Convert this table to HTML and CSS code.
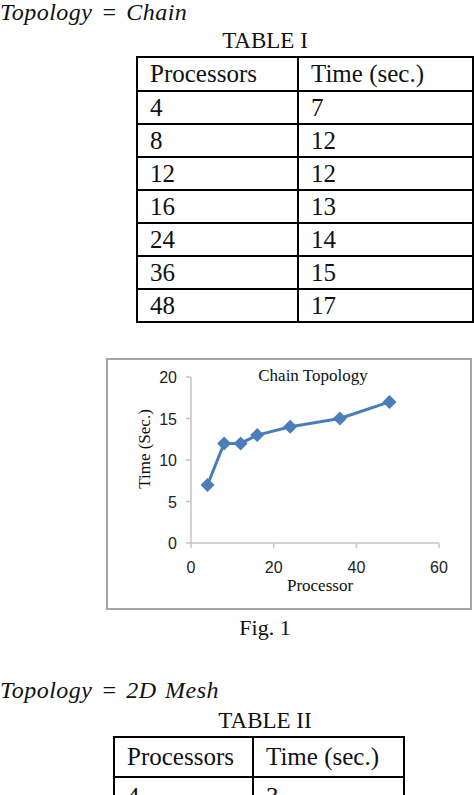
FILE: index.html
```html
<!DOCTYPE html>
<html lang="en">
<head>
    <meta charset="UTF-8">
    <meta name="viewport" content="width=device-width, initial-scale=1.0">
    <title>Topology results</title>
    <link rel="stylesheet" href="styles.css">
</head>
<body>
    <p class="topology">Topology = Chain</p>
    <p class="caption">TABLE I</p>
    <table class="results results-chain">
        <tr class="head"><td>Processors</td><td>Time (sec.)</td></tr>
        <tr><td>4</td><td>7</td></tr>
        <tr><td>8</td><td>12</td></tr>
        <tr><td>12</td><td>12</td></tr>
        <tr><td>16</td><td>13</td></tr>
        <tr><td>24</td><td>14</td></tr>
        <tr><td>36</td><td>15</td></tr>
        <tr><td>48</td><td>17</td></tr>
    </table>

    <div class="figure-box">
        <svg class="chart" width="362" height="248" viewBox="0 0 362 248">
            <!-- axes -->
            <g stroke="#c4c4c4" stroke-width="1.5" fill="none">
                <line x1="83" y1="17" x2="83" y2="188"/>
                <line x1="78" y1="183" x2="331" y2="183"/>
                <line x1="78" y1="17" x2="83" y2="17"/>
                <line x1="78" y1="58.5" x2="83" y2="58.5"/>
                <line x1="78" y1="100" x2="83" y2="100"/>
                <line x1="78" y1="141.5" x2="83" y2="141.5"/>
                <line x1="165.7" y1="183" x2="165.7" y2="188"/>
                <line x1="248.4" y1="183" x2="248.4" y2="188"/>
                <line x1="331" y1="183" x2="331" y2="188"/>
            </g>
            <g class="tick-label" text-anchor="end">
                <text x="69" y="23">20</text>
                <text x="69" y="64.5">15</text>
                <text x="69" y="106">10</text>
                <text x="69" y="147.5">5</text>
                <text x="69" y="189">0</text>
            </g>
            <g class="tick-label" text-anchor="middle">
                <text x="83" y="213">0</text>
                <text x="165.7" y="213">20</text>
                <text x="248.4" y="213">40</text>
                <text x="331" y="213">60</text>
            </g>
            <text class="chart-title" x="205" y="21" text-anchor="middle">Chain Topology</text>
            <text class="axis-title" x="212" y="231" text-anchor="middle">Processor</text>
            <text class="axis-title" transform="translate(42 89) rotate(-90)" text-anchor="middle">Time (Sec.)</text>
            <!-- series -->
            <polyline points="99.5,125 116.1,83.4 132.6,83.4 149.2,75.1 182.2,66.8 231.9,58.5 281.5,41.9"
                fill="none" stroke="#4a7ebb" stroke-width="3" stroke-linejoin="round"/>
            <g fill="#4a7ebb">
                <path d="M99.5 118 l7 7 -7 7 -7 -7z"/>
                <path d="M116.1 76.4 l7 7 -7 7 -7 -7z"/>
                <path d="M132.6 76.4 l7 7 -7 7 -7 -7z"/>
                <path d="M149.2 68.1 l7 7 -7 7 -7 -7z"/>
                <path d="M182.2 59.8 l7 7 -7 7 -7 -7z"/>
                <path d="M231.9 51.5 l7 7 -7 7 -7 -7z"/>
                <path d="M281.5 34.9 l7 7 -7 7 -7 -7z"/>
            </g>
        </svg>
    </div>
    <p class="caption fig-caption">Fig. 1</p>

    <p class="topology topology-mesh">Topology = 2D Mesh</p>
    <p class="caption caption-mesh">TABLE II</p>
    <table class="results results-mesh">
        <tr><td>Processors</td><td>Time (sec.)</td></tr>
        <tr><td>4</td><td>3</td></tr>
    </table>
</body>
</html>
```

FILE: styles.css
```css
* {
    margin: 0;
    padding: 0;
    box-sizing: border-box;
}
body {
    font-family: "Liberation Serif", "DejaVu Serif", serif;
    color: #111;
    background: #fff;
    width: 474px;
    height: 795px;
    overflow: hidden;
}
.topology {
    font-style: italic;
    font-size: 24px;
    line-height: 24px;
    word-spacing: 2px;
    letter-spacing: 0.5px;
}
.caption {
    font-size: 23px;
    line-height: 26px;
    padding-left: 56px;
    text-align: center;
    margin-top: 4px;
}
.results {
    border-collapse: collapse;
    font-size: 25px;
    margin-top: 2px;
}
.results td {
    border: 2px solid #000;
    padding: 0 0 0 12px;
    vertical-align: middle;
}
.results-chain {
    margin-left: 136px;
    width: 338px;
}
.results-chain td {
    height: 33px;
    line-height: 28px;
}
.results-chain .head td {
    height: 34px;
}
.results-chain td:first-child {
    width: 161px;
}
.results-mesh {
    margin-left: 113px;
    width: 292px;
}
.results-mesh td {
    height: 40px;
    line-height: 30px;
}
.results-mesh td:first-child {
    width: 139px;
}
.figure-box {
    margin: 35px 0 0 106px;
    width: 366px;
    height: 252px;
    border: 2px solid #a6a6a6;
}
.chart {
    display: block;
}
.tick-label {
    font-family: "Liberation Sans", Arial, sans-serif;
    font-size: 16px;
    fill: #222;
}
.chart-title {
    font-family: "Liberation Serif", serif;
    font-size: 17px;
    fill: #111;
}
.axis-title {
    font-family: "Liberation Serif", serif;
    font-size: 17px;
    fill: #111;
}
.fig-caption {
    font-size: 22px;
    margin-top: 5px;
}
.topology-mesh {
    margin-top: 37px;
}
.caption-mesh {
    margin-top: 6px;
}
```
